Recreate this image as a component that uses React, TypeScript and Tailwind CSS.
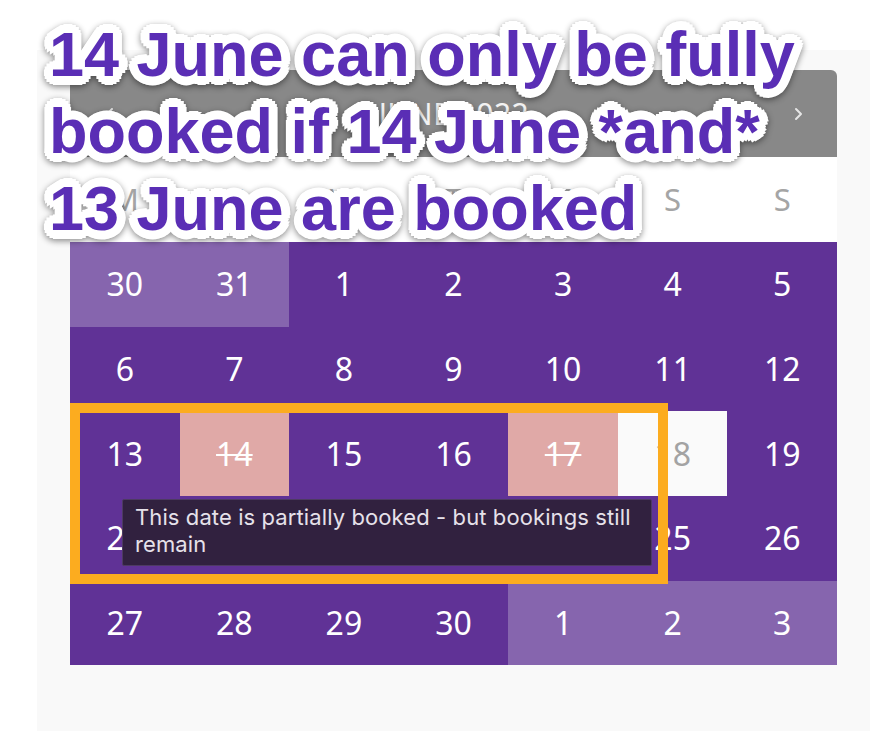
import React from "react";

type Cell = { d: number; kind: "cur" | "other" | "booked" | "closed" };

const weeks: Cell[][] = [
  [
    { d: 30, kind: "other" },
    { d: 31, kind: "other" },
    { d: 1, kind: "cur" },
    { d: 2, kind: "cur" },
    { d: 3, kind: "cur" },
    { d: 4, kind: "cur" },
    { d: 5, kind: "cur" },
  ],
  [6, 7, 8, 9, 10, 11, 12].map((d) => ({ d, kind: "cur" as const })),
  [
    { d: 13, kind: "cur" },
    { d: 14, kind: "booked" },
    { d: 15, kind: "cur" },
    { d: 16, kind: "cur" },
    { d: 17, kind: "booked" },
    { d: 18, kind: "closed" },
    { d: 19, kind: "cur" },
  ],
  [20, 21, 22, 23, 24, 25, 26].map((d) => ({ d, kind: "cur" as const })),
  [
    { d: 27, kind: "cur" },
    { d: 28, kind: "cur" },
    { d: 29, kind: "cur" },
    { d: 30, kind: "cur" },
    { d: 1, kind: "other" },
    { d: 2, kind: "other" },
    { d: 3, kind: "other" },
  ],
];

const dayNames = ["M", "T", "W", "T", "F", "S", "S"];

function cellClass(kind: Cell["kind"]) {
  switch (kind) {
    case "other":
      return "bg-[#8665ae] text-white";
    case "booked":
      return "bg-[#e0a9a7] text-white line-through decoration-[2px]";
    case "closed":
      return "bg-[#fafafa] text-[#a3a3a3]";
    default:
      return "bg-[#603296] text-white";
  }
}

function Chevron({ dir }: { dir: "left" | "right" }) {
  return (
    <svg width="9" height="14" viewBox="0 0 9 14" fill="none">
      <path
        d={dir === "right" ? "M2 2 L7 7 L2 12" : "M7 2 L2 7 L7 12"}
        stroke="#e6e6e6"
        strokeWidth="2"
        strokeLinecap="round"
        strokeLinejoin="round"
      />
    </svg>
  );
}

export default function App() {
  return (
    <div className="relative w-[886px] h-[748px] bg-white overflow-hidden pt-[50px] pl-[37px] font-['Noto_Sans',sans-serif]">
      {/* page panel */}
      <div className="w-[833px] h-[681px] bg-[#f9f9f9] pt-[20px] pl-[33px]">
        <div className="relative w-[767px] flex flex-col">
          {/* month header */}
          <div className="h-[87px] bg-[#888888] rounded-t-[6px] flex items-center justify-between pl-[35px] pr-[34px]">
            <Chevron dir="left" />
            <span className="text-[30px] text-[#f2f2f2] tracking-[0.5px]">JUNE 2022</span>
            <Chevron dir="right" />
          </div>

          {/* weekday names */}
          <div className="h-[85px] bg-white grid grid-cols-7">
            {dayNames.map((n, i) => (
              <div key={i} className="flex items-center justify-center text-[31px] text-[#a5a5a5]">
                {n}
              </div>
            ))}
          </div>

          {/* days */}
          {weeks.map((w, wi) => (
            <div key={wi} className="h-[84.7px] grid grid-cols-7">
              {w.map((c, ci) => (
                <div
                  key={ci}
                  className={`flex items-center justify-center text-[32px] ${cellClass(c.kind)}`}
                >
                  {c.d}
                </div>
              ))}
            </div>
          ))}

          {/* highlight frame */}
          <div className="absolute left-0 top-[332.5px] w-[598px] h-[181.5px] border-[10px] border-[#fcac1f]" />

          {/* tooltip */}
          <div className="absolute left-[52px] top-[429px] w-[530px] h-[67px] bg-[#31213f] border border-[#4d3b62] rounded-[2px] pl-[12px] pt-[4px] font-['Inter',sans-serif] text-[22px] leading-[27px] tracking-[0.1px] text-[#e6e1ea] whitespace-nowrap">
            This date is partially booked - but bookings still
            <br />
            remain
          </div>
        </div>
      </div>

      {/* annotation */}
      <div className="absolute left-[49px] top-[16px] drop-shadow-[0_2px_3px_rgba(0,0,0,0.45)]">
        <div className="font-['Liberation_Sans',Arial,sans-serif] font-bold text-[63px] leading-[77px] text-[#5a2eb5] whitespace-nowrap [text-shadow:9px_0_0_#fff,8.3px_3.4px_0_#fff,6.4px_6.4px_0_#fff,3.4px_8.3px_0_#fff,0_9px_0_#fff,-3.4px_8.3px_0_#fff,-6.4px_6.4px_0_#fff,-8.3px_3.4px_0_#fff,-9px_0_0_#fff,-8.3px_-3.4px_0_#fff,-6.4px_-6.4px_0_#fff,-3.4px_-8.3px_0_#fff,0_-9px_0_#fff,3.4px_-8.3px_0_#fff,6.4px_-6.4px_0_#fff,8.3px_-3.4px_0_#fff,5px_0_0_#fff,3.5px_3.5px_0_#fff,0_5px_0_#fff,-3.5px_3.5px_0_#fff,-5px_0_0_#fff,-3.5px_-3.5px_0_#fff,0_-5px_0_#fff,3.5px_-3.5px_0_#fff]">
          <div>14 June can only be fully</div>
          <div>booked if 14 June *and*</div>
          <div>13 June are booked</div>
        </div>
      </div>
    </div>
  );
}
